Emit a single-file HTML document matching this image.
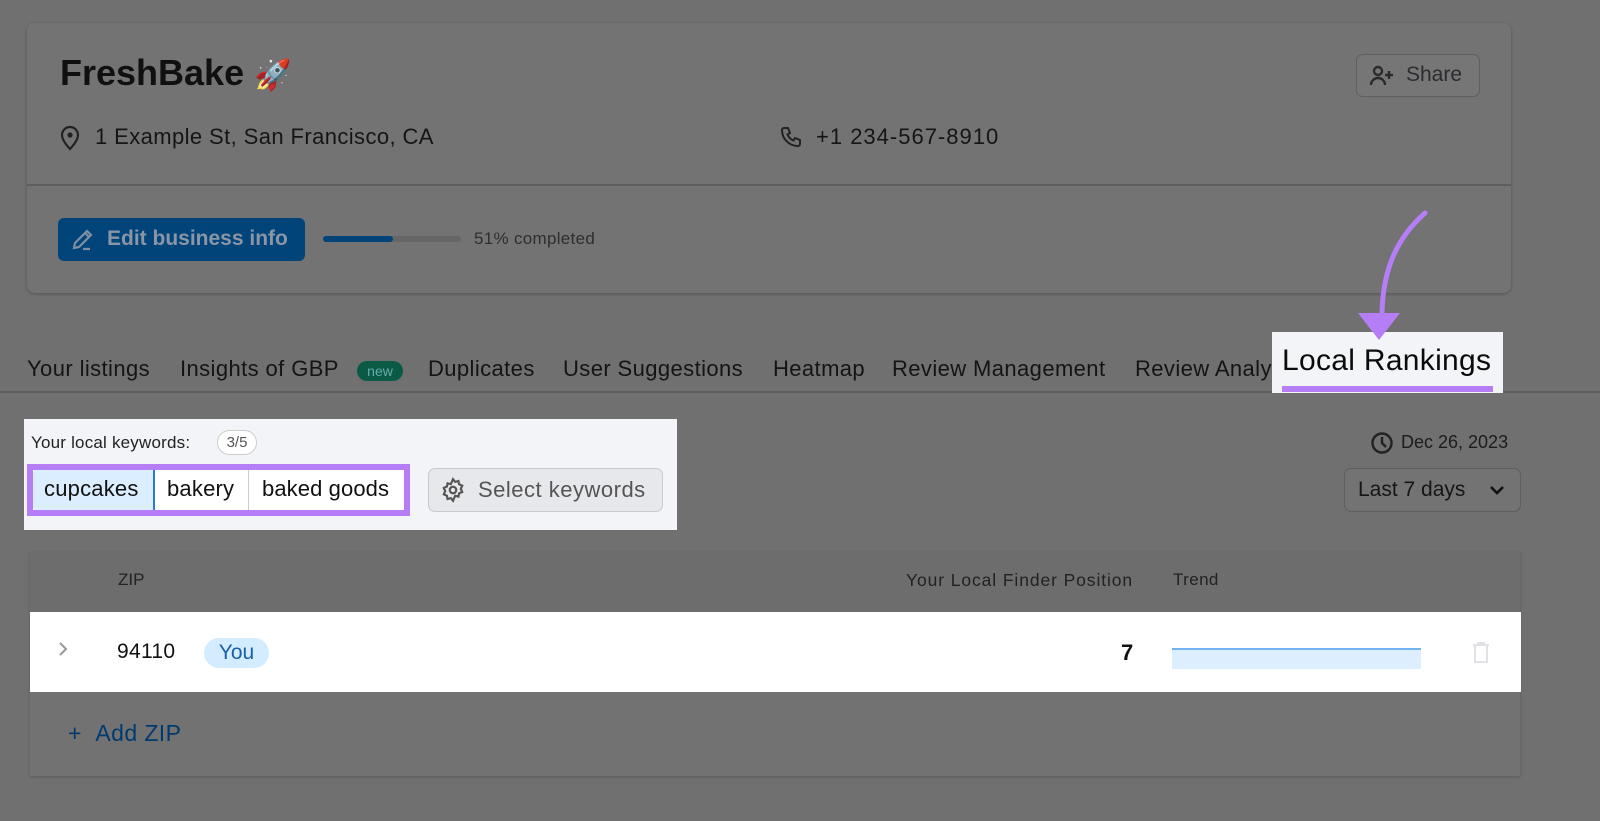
<!DOCTYPE html>
<html><head><meta charset="utf-8"><style>
*{margin:0;padding:0;box-sizing:border-box}
body{width:1600px;height:821px;background:#707070;font-family:"Liberation Sans",sans-serif;position:relative;overflow:hidden;color:#1a1a1a}
.a{position:absolute;white-space:nowrap}
.t{font-size:22px;letter-spacing:0.4px;color:#141414;top:356px}
</style></head><body>
<div class="a" style="left:27px;top:23px;width:1484px;height:270px;background:#737373;border-radius:8px;box-shadow:0 1px 3px rgba(0,0,0,.25)"></div>
<div class="a" style="left:27px;top:184px;width:1484px;height:2px;background:#5e5e60"></div>
<div class="a" style="left:60px;top:52px;font-size:36px;font-weight:bold;color:#101010">FreshBake <span style="font-size:30px">🚀</span></div>
<svg class="a" style="left:58px;top:125px" width="24" height="26" viewBox="0 0 24 26"><path d="M12 2a8 8 0 0 0-8 8c0 6 8 14 8 14s8-8 8-14a8 8 0 0 0-8-8z" fill="none" stroke="#222" stroke-width="2.2"/><circle cx="12" cy="10" r="2.6" fill="#222"/></svg>
<div class="a" style="left:95px;top:124px;font-size:22px;letter-spacing:0.4px;color:#151515">1 Example St, San Francisco, CA</div>
<svg class="a" style="left:779px;top:125px" width="24" height="24" viewBox="0 0 24 24"><path d="M5 3h4l2 5-2.5 1.5a11 11 0 0 0 6 6L16 13l5 2v4a2 2 0 0 1-2 2A16 16 0 0 1 3 5a2 2 0 0 1 2-2z" fill="none" stroke="#222" stroke-width="2"/></svg>
<div class="a" style="left:816px;top:124px;font-size:22px;letter-spacing:1px;color:#151515">+1 234-567-8910</div>
<div class="a" style="left:1356px;top:54px;width:124px;height:43px;border:1px solid #5f5f60;border-radius:7px;background:#767676"></div>
<svg class="a" style="left:1368px;top:64px" width="28" height="24" viewBox="0 0 28 24"><circle cx="10" cy="7" r="4" fill="none" stroke="#2a2a2a" stroke-width="2.4"/><path d="M3 21a7 7 0 0 1 14 0" fill="none" stroke="#2a2a2a" stroke-width="2.4"/><path d="M21 7v8M17 11h8" stroke="#2a2a2a" stroke-width="2.4"/></svg>
<div class="a" style="left:1406px;top:63px;font-size:21px;color:#2c2c30">Share</div>
<div class="a" style="left:58px;top:218px;width:247px;height:43px;background:#00447a;border-radius:6px"></div>
<svg class="a" style="left:70px;top:227px" width="26" height="26" viewBox="0 0 26 26"><path d="M4 21l1-5L17 4l4 4L9 20z M15 6l4 4 M13 22h7" fill="none" stroke="#7f8ea0" stroke-width="2.2"/></svg>
<div class="a" style="left:107px;top:227px;font-size:21px;font-weight:bold;color:#8a96a6">Edit business info</div>
<div class="a" style="left:323px;top:236px;width:138px;height:6px;background:#666;border-radius:3px"></div>
<div class="a" style="left:323px;top:236px;width:70px;height:6px;background:#00447a;border-radius:3px"></div>
<div class="a" style="left:474px;top:229px;font-size:17px;letter-spacing:0.3px;color:#2e2e2e">51% completed</div>

<div class="a" style="left:0;top:391px;width:1600px;height:2px;background:#5d5d5f"></div>
<div class="a t" style="left:27px">Your listings</div>
<div class="a t" style="left:180px">Insights of GBP</div>
<div class="a" style="left:357px;top:361px;width:46px;height:20px;background:#0a5a45;border-radius:10px;font-size:14px;color:#6aa;text-align:center;line-height:20px">new</div>
<div class="a t" style="left:428px">Duplicates</div>
<div class="a t" style="left:563px">User Suggestions</div>
<div class="a t" style="left:773px">Heatmap</div>
<div class="a t" style="left:892px">Review Management</div>
<div class="a t" style="left:1135px">Review Analy</div>
<div class="a" style="left:1272px;top:332px;width:231px;height:61px;background:#f3f4f8"></div>
<div class="a" style="left:1282px;top:344px;font-size:30px;letter-spacing:0.3px;color:#0b0b0b">Local Rankings</div>
<div class="a" style="left:1282px;top:386px;width:211px;height:6px;background:#b57ef7"></div>
<svg class="a" style="left:1350px;top:205px" width="90" height="140" viewBox="0 0 90 140"><path d="M75 8C50 30 33 60 32 108" fill="none" stroke="#b57ef7" stroke-width="5" stroke-linecap="round"/><path d="M8 108h42L29 135z" fill="#b57ef7"/></svg>

<div class="a" style="left:24px;top:419px;width:653px;height:111px;background:#f3f4f8"></div>
<div class="a" style="left:31px;top:433px;font-size:17px;letter-spacing:0.2px;color:#222">Your local keywords:</div>
<div class="a" style="left:217px;top:430px;width:40px;height:25px;border:1px solid #ccc;border-radius:13px;background:#fff;font-size:15px;color:#555;text-align:center;line-height:23px">3/5</div>
<div class="a" style="left:27px;top:464px;width:383px;height:52px;background:#b57ef7"></div>
<div class="a" style="left:33px;top:470px;width:371px;height:40px;background:#fff"></div>
<div class="a" style="left:33px;top:470px;width:122px;height:40px;background:#dbeeff;border-right:2px solid #2d7ad6;border-radius:3px 0 0 3px"></div>
<div class="a" style="left:248px;top:470px;width:1px;height:40px;background:#ccc"></div>
<div class="a" style="left:44px;top:476px;font-size:22px;letter-spacing:0.2px;color:#111">cupcakes</div>
<div class="a" style="left:167px;top:476px;font-size:22px;letter-spacing:0.2px;color:#111">bakery</div>
<div class="a" style="left:262px;top:476px;font-size:22px;letter-spacing:0.1px;color:#111">baked goods</div>
<div class="a" style="left:428px;top:468px;width:235px;height:44px;background:#e7e8ec;border:1px solid #c8c9ce;border-radius:7px"></div>
<svg class="a" style="left:440px;top:477px" width="26" height="26" viewBox="0 0 24 24"><path d="M12 2l2 2.5 3-.8.6 3 2.9 1.3-1.3 2.9 1.3 2.9-2.9 1.3-.6 3-3-.8L12 22l-2-2.5-3 .8-.6-3-2.9-1.3 1.3-2.9L3.5 10.1l2.9-1.3.6-3 3 .8z" fill="none" stroke="#555" stroke-width="2"/><circle cx="12" cy="12" r="3" fill="none" stroke="#555" stroke-width="2"/></svg>
<div class="a" style="left:478px;top:477px;font-size:22px;letter-spacing:0.5px;color:#555">Select keywords</div>

<svg class="a" style="left:1370px;top:431px" width="24" height="24" viewBox="0 0 24 24"><circle cx="12" cy="12" r="9.5" fill="none" stroke="#222" stroke-width="2.4"/><path d="M12 6v6l4 4" fill="none" stroke="#222" stroke-width="2.4"/></svg>
<div class="a" style="left:1401px;top:432px;font-size:18px;color:#1c1c1c">Dec 26, 2023</div>
<div class="a" style="left:1344px;top:468px;width:177px;height:44px;border:1px solid #5f5f60;border-radius:7px;background:#737373"></div>
<div class="a" style="left:1358px;top:478px;font-size:21px;color:#151515">Last 7 days</div>
<svg class="a" style="left:1488px;top:483px" width="18" height="14" viewBox="0 0 18 14"><path d="M3 4l6 6 6-6" fill="none" stroke="#111" stroke-width="2.6"/></svg>

<div class="a" style="left:30px;top:552px;width:1490px;height:224px;background:#727272;box-shadow:0 1px 3px rgba(0,0,0,.2)"></div>
<div class="a" style="left:30px;top:552px;width:1490px;height:60px;background:#6d6d6d"></div>
<div class="a" style="left:118px;top:570px;font-size:17px;color:#222">ZIP</div>
<div class="a" style="left:906px;top:570px;font-size:17.5px;letter-spacing:0.9px;color:#222">Your Local Finder Position</div>
<div class="a" style="left:1173px;top:570px;font-size:17px;letter-spacing:0.4px;color:#222">Trend</div>
<div class="a" style="left:30px;top:612px;width:1491px;height:80px;background:#fff"></div>
<svg class="a" style="left:56px;top:640px" width="14" height="18" viewBox="0 0 14 18"><path d="M4 3l6 6-6 6" fill="none" stroke="#999" stroke-width="2"/></svg>
<div class="a" style="left:117px;top:640px;font-size:21px;letter-spacing:0.3px;color:#111">94110</div>
<div class="a" style="left:204px;top:638px;width:65px;height:30px;background:#d4ecff;border-radius:15px;font-size:21px;color:#1a5fa8;text-align:center;line-height:30px">You</div>
<div class="a" style="left:1121px;top:640px;font-size:22px;font-weight:bold;color:#111">7</div>
<div class="a" style="left:1172px;top:648px;width:249px;height:21px;background:#ddefff;border-top:2px solid #6fb3f2"></div>
<svg class="a" style="left:1470px;top:640px" width="22" height="24" viewBox="0 0 22 24"><path d="M3 5h16M8 5V3h6v2M5 5v17h12V5" fill="none" stroke="#e2e2e6" stroke-width="2"/></svg>
<div class="a" style="left:68px;top:720px;font-size:23px;letter-spacing:0.4px;color:#003a6e">+&nbsp;&nbsp;Add ZIP</div>
</body></html>
